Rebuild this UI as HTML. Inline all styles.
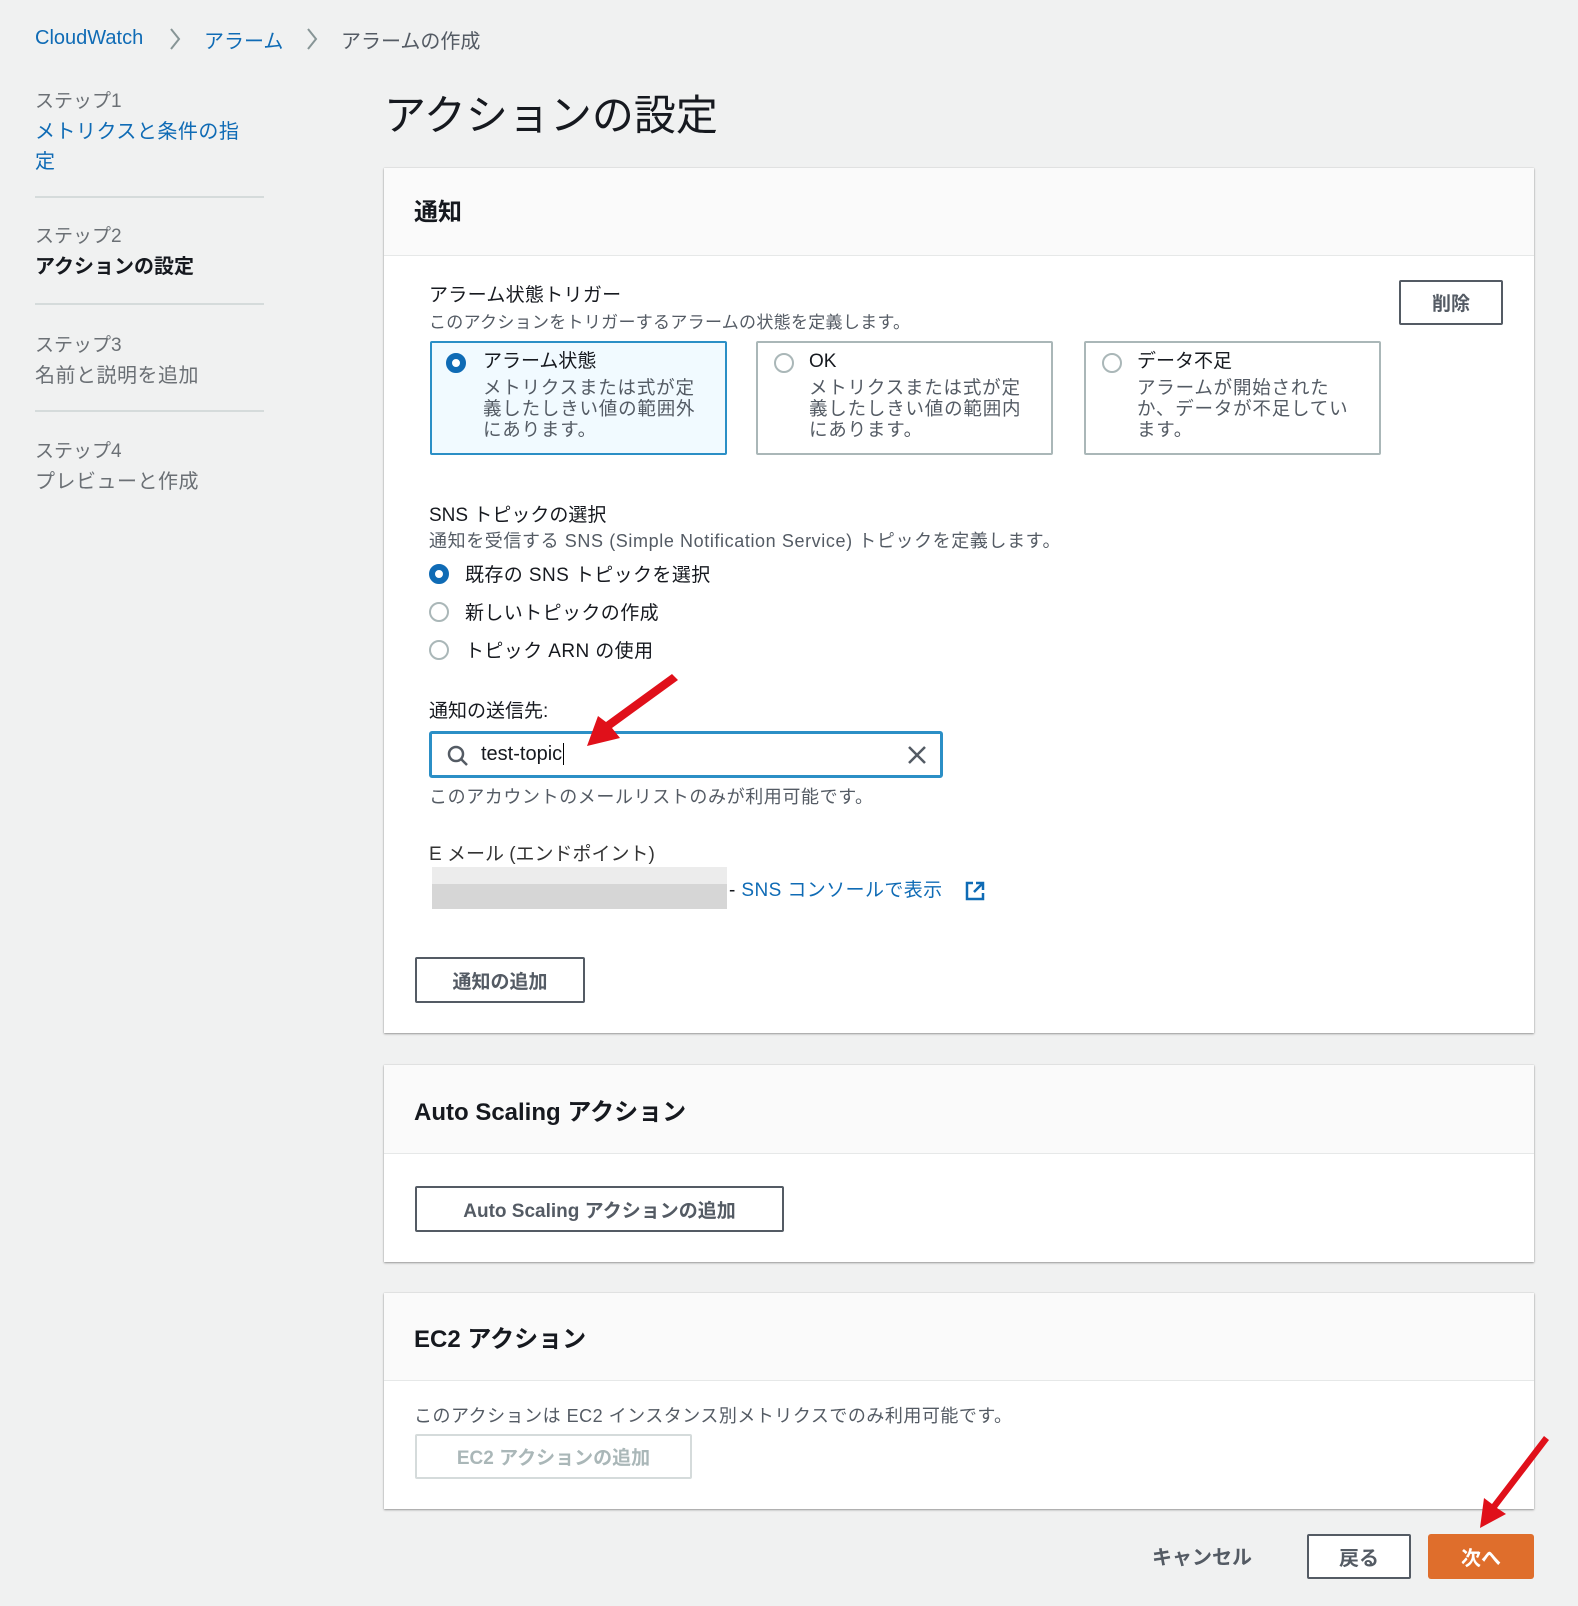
<!DOCTYPE html>
<html><head><meta charset="utf-8"><style>
*{box-sizing:border-box;margin:0;padding:0}
body{width:1578px;height:1606px;background:#f0f1f1;font-family:"Liberation Sans","Noto Sans CJK JP",sans-serif;color:#16191f;position:relative;overflow:hidden;font-size:19px}
.a{position:absolute;white-space:nowrap}
.blue{color:#0f6bb5}
.gray{color:#6b7075}
.sub{color:#545b64}
.panel{position:absolute;left:384px;width:1150px;background:#fff;box-shadow:0 1px 2px rgba(0,0,0,.35),0 0 1px rgba(0,0,0,.2)}
.ph{position:absolute;left:0;top:0;width:100%;background:#fafafa;border-bottom:1px solid #e6e8e8}
.ph span{position:absolute;left:30px;font-weight:bold;font-size:24px}
.btn{position:absolute;border:2px solid #545b64;border-radius:2px;background:#fff;font-weight:bold;font-size:19px;color:#545b64;display:flex;align-items:center;justify-content:center}
.line{position:absolute;left:35px;width:229px;height:2px;background:#d5dbdb}
.card{position:absolute;top:341px;height:114px;width:297px;border:2px solid #aab7b8;border-radius:2px;background:#fff}
.card.sel{border-color:#2b8fc6;background:#f1faff}
.rad{position:absolute;width:20px;height:20px;border-radius:50%;border:2px solid #aab7b8;background:#fff}
.rad.on{border:6px solid #0f6bb5}
.card .t{position:absolute;left:51px;top:8px;font-size:19px;line-height:22px}
.card .d{position:absolute;left:51px;top:34px;font-size:18.5px;letter-spacing:0.8px;line-height:21px;color:#545b64;white-space:nowrap}
</style></head><body>
<div class="a blue" style="left:35px;top:27px;font-size:20px">CloudWatch</div>
<svg class="a" style="left:168px;top:26px" width="14" height="26" viewBox="0 0 14 26"><path d="M3 3l8 10-8 10" fill="none" stroke="#879596" stroke-width="2"/></svg>
<div class="a blue" style="left:204px;top:25px;font-size:20px">アラーム</div>
<svg class="a" style="left:305px;top:26px" width="14" height="26" viewBox="0 0 14 26"><path d="M3 3l8 10-8 10" fill="none" stroke="#879596" stroke-width="2"/></svg>
<div class="a sub" style="left:341px;top:25px;font-size:20px">アラームの作成</div>

<div class="a gray" style="left:35px;top:86px;font-size:19px">ステップ1</div>
<div class="a blue" style="left:35px;top:115px;font-size:20px;letter-spacing:0.5px">メトリクスと条件の指</div>
<div class="a blue" style="left:35px;top:145px;font-size:20px">定</div>
<div class="line" style="top:196px"></div>
<div class="a gray" style="left:35px;top:221px;font-size:19px">ステップ2</div>
<div class="a" style="left:35px;top:250px;font-size:20px;font-weight:bold">アクションの設定</div>
<div class="line" style="top:303px"></div>
<div class="a gray" style="left:35px;top:330px;font-size:19px">ステップ3</div>
<div class="a gray" style="left:35px;top:359px;font-size:20px;letter-spacing:0.5px">名前と説明を追加</div>
<div class="line" style="top:410px"></div>
<div class="a gray" style="left:35px;top:436px;font-size:19px">ステップ4</div>
<div class="a gray" style="left:35px;top:465px;font-size:20px;letter-spacing:0.5px">プレビューと作成</div>

<div class="a" style="left:384px;top:82px;font-size:42px">アクションの設定</div>

<div class="panel" style="top:168px;height:865px">
 <div class="ph" style="height:88px"><span style="top:24px">通知</span></div>
 <div class="a" style="left:45px;top:112px;font-size:19px;letter-spacing:0.3px">アラーム状態トリガー</div>
 <div class="a sub" style="left:45px;top:140px;font-size:17px;letter-spacing:0.3px">このアクションをトリガーするアラームの状態を定義します。</div>
 <div class="btn" style="left:1015px;top:112px;width:104px;height:45px">削除</div>
 <div class="card sel" style="left:46px;top:173px"><div class="rad on" style="left:14px;top:10px"></div><div class="t">アラーム状態</div><div class="d">メトリクスまたは式が定<br>義したしきい値の範囲外<br>にあります。</div></div>
 <div class="card" style="left:372px;top:173px"><div class="rad" style="left:16px;top:10px"></div><div class="t">OK</div><div class="d">メトリクスまたは式が定<br>義したしきい値の範囲内<br>にあります。</div></div>
 <div class="card" style="left:700px;top:173px"><div class="rad" style="left:16px;top:10px"></div><div class="t">データ不足</div><div class="d">アラームが開始された<br>か、データが不足してい<br>ます。</div></div>
 <div class="a" style="left:45px;top:332px;font-size:19px">SNS トピックの選択</div>
 <div class="a sub" style="left:45px;top:359px;font-size:18px;letter-spacing:0.6px">通知を受信する SNS (Simple Notification Service) トピックを定義します。</div>
 <div class="rad on" style="left:45px;top:396px"></div><div class="a" style="left:81px;top:392px;font-size:19px;letter-spacing:0.4px">既存の SNS トピックを選択</div>
 <div class="rad" style="left:45px;top:434px"></div><div class="a" style="left:81px;top:430px;font-size:19px;letter-spacing:0.4px">新しいトピックの作成</div>
 <div class="rad" style="left:45px;top:472px"></div><div class="a" style="left:81px;top:468px;font-size:19px;letter-spacing:0.4px">トピック ARN の使用</div>
 <div class="a" style="left:45px;top:528px;font-size:19px">通知の送信先:</div>
 <div class="a" style="left:45px;top:563px;width:514px;height:47px;border:3px solid #2b8fc6;border-radius:3px"></div>
 <svg class="a" style="left:62px;top:576px" width="24" height="24" viewBox="0 0 24 24"><circle cx="10" cy="10" r="7" fill="none" stroke="#545b64" stroke-width="2.5"/><path d="M15 15l6 6" stroke="#545b64" stroke-width="2.5"/></svg>
 <div class="a" style="left:97px;top:575px;font-size:20px">test-topic<span style="border-left:1.5px solid #000;margin-left:1px"></span></div>
 <svg class="a" style="left:523px;top:577px" width="20" height="20" viewBox="0 0 20 20"><path d="M2 2l16 16M18 2L2 18" stroke="#545b64" stroke-width="2.5"/></svg>
 <div class="a sub" style="left:45px;top:615px;font-size:18px;letter-spacing:0.6px">このアカウントのメールリストのみが利用可能です。</div>
 <div class="a" style="left:45px;top:671px;font-size:19px;color:#333">E メール (エンドポイント)</div>
 <div class="a" style="left:48px;top:699px;width:295px;height:42px;background:linear-gradient(#ececec 0 17px,#d6d6d6 17px)"></div>
 <div class="a" style="left:345px;top:707px;font-size:19px;letter-spacing:0.4px"><span>- </span><span class="blue">SNS コンソールで表示</span></div>
 <svg class="a" style="left:580px;top:712px" width="22" height="22" viewBox="0 0 22 22"><path d="M9 3H3v16h16v-6M12 3h7v7M19 3l-9 9" fill="none" stroke="#0f6bb5" stroke-width="2.5"/></svg>
 <div class="btn" style="left:31px;top:789px;width:170px;height:46px">通知の追加</div>
</div>

<div class="panel" style="top:1065px;height:197px">
 <div class="ph" style="height:89px"><span style="top:27px">Auto Scaling アクション</span></div>
 <div class="btn" style="left:31px;top:121px;width:369px;height:46px">Auto Scaling アクションの追加</div>
</div>

<div class="panel" style="top:1293px;height:216px">
 <div class="ph" style="height:88px"><span style="top:26px">EC2 アクション</span></div>
 <div class="a sub" style="left:30px;top:109px;font-size:18px;letter-spacing:0.5px">このアクションは EC2 インスタンス別メトリクスでのみ利用可能です。</div>
 <div class="btn" style="left:31px;top:141px;width:277px;height:45px;border-color:#d5dbdb;color:#aab7b8">EC2 アクションの追加</div>
</div>

<div class="a" style="left:1152px;top:1541px;font-size:20px;font-weight:bold;color:#545b64">キャンセル</div>
<div class="btn" style="left:1307px;top:1534px;width:104px;height:45px;font-size:20px">戻る</div>
<div class="a" style="left:1428px;top:1534px;width:106px;height:45px;background:#df6e2c;border-radius:3px;color:#fff;font-weight:bold;font-size:20px;display:flex;align-items:center;justify-content:center">次へ</div>

<svg class="a" style="left:0;top:0" width="1578" height="1606">
 <g fill="#e0101a">
  <path d="M672 674 L678 680 L612 728 L620 738 L587 746 L598 716 L606 722 Z"/>
  <path d="M1544 1436 L1549 1440 L1497 1508 L1506 1514 L1480 1528 L1484 1498 L1492 1504 Z"/>
 </g>
</svg>
</body></html>
